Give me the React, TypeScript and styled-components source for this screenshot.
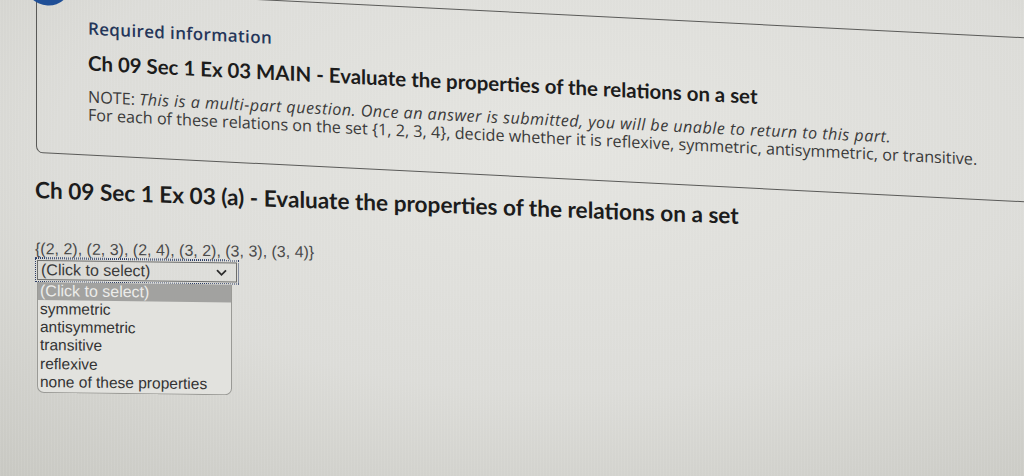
import React from "react"
import styled, { createGlobalStyle } from "styled-components"

const options = [
  "symmetric",
  "antisymmetric",
  "transitive",
  "reflexive",
  "none of these properties",
]

const App = () => {
  return (
    <Page>
      <GlobalStyle />
      <Sheet>
        <InfoBox>
          <Badge />
          <Required>Required information</Required>
          <MainTitle>Ch 09 Sec 1 Ex 03 MAIN - Evaluate the properties of the relations on a set</MainTitle>
          <Note>
            NOTE: <Warning>This is a multi-part question. Once an answer is submitted, you will be unable to return to this part.</Warning>
            <br />
            For each of these relations on the set {"{1, 2, 3, 4}"}, decide whether it is reflexive, symmetric, antisymmetric, or transitive.
          </Note>
        </InfoBox>

        <PartTitle>Ch 09 Sec 1 Ex 03 (a) - Evaluate the properties of the relations on a set</PartTitle>

        <Question>
          <SetText>
            <Linked>{"{(2, 2), (2, 3), (2, 4), (3, 2), "}</Linked>
            {"(3, 3), (3, 4)}"}
          </SetText>
          <SelectField>
            <SelectLabel>(Click to select)</SelectLabel>
            <svg width="11" height="7" viewBox="0 0 11 7">
              <path d="M1 1 L5.5 5.5 L10 1" fill="none" stroke="#2b2b2b" strokeWidth="1.8" />
            </svg>
            <OptionList>
              <OptionItem $active>(Click to select)</OptionItem>
              {options.map((o) => (
                <OptionItem key={o}>{o}</OptionItem>
              ))}
            </OptionList>
          </SelectField>
        </Question>
      </Sheet>
    </Page>
  )
}
export default App

const GlobalStyle = createGlobalStyle`
html, body {
  margin: 0;
  padding: 0;
}
body {
  width: 1024px;
  height: 476px;
  overflow: hidden;
  background: #d9d9d5;
}
`

const Page = styled.div`
width: 1024px;
height: 476px;
overflow: hidden;
background:
  repeating-linear-gradient(90deg, rgba(255,255,255,0.07) 0 1px, transparent 1px 3px),
  radial-gradient(ellipse 90% 95% at 55% 30%, #e4e4e0 0%, #dcdcd8 55%, #c6c6c0 100%);
`

const Sheet = styled.div`
padding-left: 35px;
`

// the photo is taken at an angle: each band leans a little less than the one above
const InfoBox = styled.section`
position: relative;
box-sizing: border-box;
margin: -12px 0 0 1px;
width: 1010px;
height: 165px;
border: 1px solid #5a5a58;
border-radius: 0 0 7px 7px;
padding: 26px 0 0 51px;
transform: skewY(2.85deg);
transform-origin: 0 0;
`

const Badge = styled.div`
position: absolute;
left: -13px;
top: -31px;
width: 47px;
height: 47px;
border-radius: 50%;
background: #1f4f97;
`

const Required = styled.div`
font-family: "Open Sans", "Noto Sans", sans-serif;
font-weight: 600;
font-size: 17px;
letter-spacing: 0.35px;
line-height: 22px;
color: #25365a;
`

const MainTitle = styled.h2`
margin: 9.5px 0 0;
font-family: Lato, "Noto Sans", sans-serif;
font-weight: 700;
font-size: 20.4px;
line-height: 26px;
color: #1c1c1c;
white-space: nowrap;
`

const Note = styled.p`
margin: 12px 0 0;
font-family: "Open Sans", "Noto Sans", sans-serif;
font-weight: 400;
font-size: 16.2px;
line-height: 18.5px;
color: #3a3a3a;
white-space: nowrap;
`

const Warning = styled.em`
letter-spacing: 0.45px;
`

const PartTitle = styled.h2`
margin: 22px 0 0;
font-family: Lato, "Noto Sans", sans-serif;
font-weight: 700;
font-size: 22.6px;
line-height: 30px;
color: #1c1c1c;
white-space: nowrap;
transform: skewY(2.1deg);
transform-origin: 0 0;
`

const Question = styled.div`
margin-top: 35px;
font-family: "Liberation Sans", Arial, sans-serif;
color: #4a4a4a;
transform: skewY(0.7deg);
transform-origin: 0 0;
`

const SetText = styled.div`
font-size: 16px;
line-height: 18px;
white-space: nowrap;
`

const Linked = styled.span`
border-bottom: 1px dotted #3b4d78;
`

const SelectField = styled.div`
position: relative;
box-sizing: border-box;
display: flex;
align-items: center;
justify-content: space-between;
margin: 2px 0 0 2px;
width: 200px;
height: 20px;
padding: 0 9px 0 3px;
border: 1px solid #6e6e6c;
outline: 1px dotted #2c3d66;
outline-offset: 1px;
color: #3a3a3a;
font-size: 16px;
`

const SelectLabel = styled.span`
line-height: 18px;
`

const OptionList = styled.ul`
position: absolute;
left: -1px;
top: calc(100% + 3px);
box-sizing: border-box;
width: 195px;
margin: 0;
padding: 0 0 1px;
list-style: none;
background: #e2e2de;
border: 1px solid #9a9a96;
border-top: none;
border-radius: 0 0 7px 7px;
overflow: hidden;
font-size: 15.5px;
`

const OptionItem = styled.li<{ $active?: boolean }>`
height: ${(p) => (p.$active ? "17.5px" : "18.4px")};
line-height: ${(p) => (p.$active ? "17.5px" : "18.4px")};
padding-left: 2px;
white-space: nowrap;
font-size: ${(p) => (p.$active ? "16px" : "15.5px")};
color: ${(p) => (p.$active ? "#ececea" : "#333")};
background: ${(p) => (p.$active ? "#a2a2a0" : "transparent")};
`
